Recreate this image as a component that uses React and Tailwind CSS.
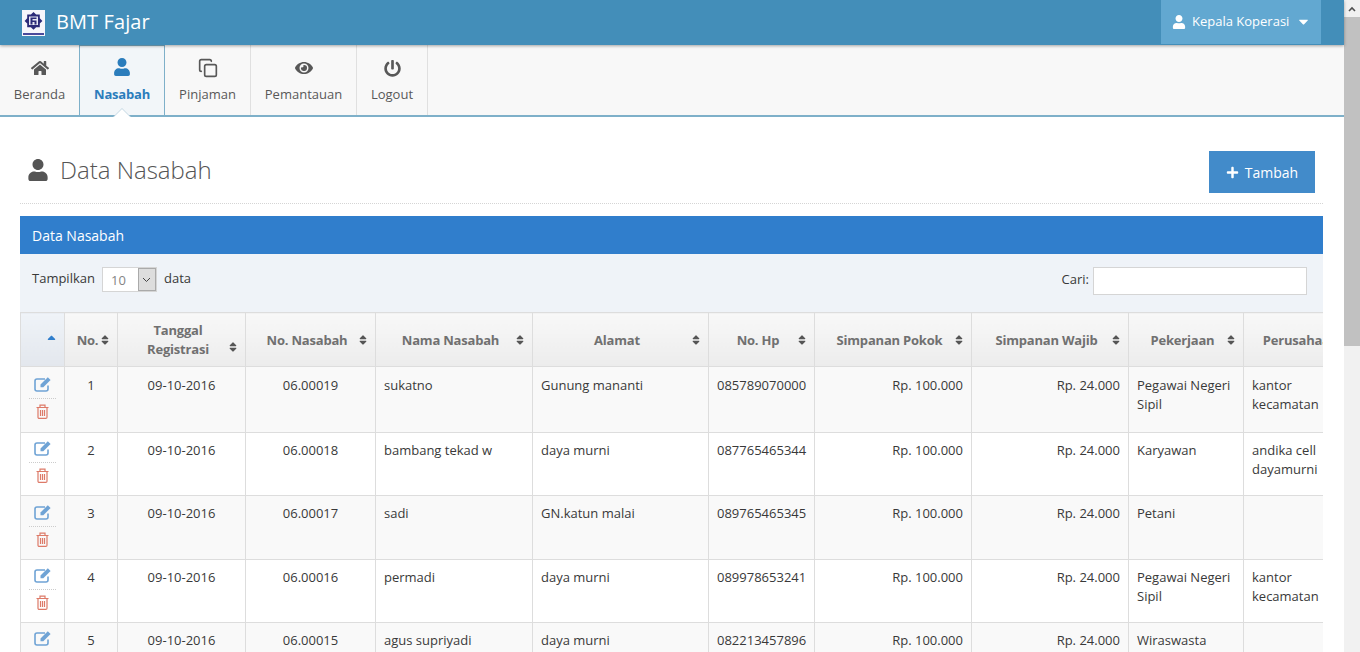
import { Copy } from "lucide-react";
import {
  FaCaretDown,
  FaCaretUp,
  FaEye,
  FaHome,
  FaPlus,
  FaPowerOff,
  FaSort,
  FaUser,
} from "react-icons/fa";

const menu = [
  { label: "Beranda", icon: <FaHome size={18} />, width: "w-[80px]" },
  { label: "Nasabah", icon: <FaUser size={18} />, width: "w-[86px]", active: true },
  { label: "Pinjaman", icon: <Copy size={20} strokeWidth={2} />, width: "w-[86px]" },
  { label: "Pemantauan", icon: <FaEye size={18} />, width: "w-[106px]" },
  { label: "Logout", icon: <FaPowerOff size={17} />, width: "w-[71px]" },
];

const columns = [
  { label: "", width: "w-[44px]" },
  { label: "No.", width: "w-[53px]" },
  { label: "Tanggal Registrasi", width: "w-[128px]" },
  { label: "No. Nasabah", width: "w-[130px]" },
  { label: "Nama Nasabah", width: "w-[157px]" },
  { label: "Alamat", width: "w-[176px]" },
  { label: "No. Hp", width: "w-[106px]" },
  { label: "Simpanan Pokok", width: "w-[157px]" },
  { label: "Simpanan Wajib", width: "w-[157px]" },
  { label: "Pekerjaan", width: "w-[115px]" },
  { label: "Perusahaan", width: "w-[115px]" },
];

const rows = [
  { no: 1, nasabah: "06.00019", nama: "sukatno", alamat: "Gunung mananti", hp: "085789070000", kerja: "Pegawai Negeri Sipil", usaha: "kantor kecamatan", height: "h-[66px]", pad: "pt-[9px]", iconPad: "pt-[8px]" },
  { no: 2, nasabah: "06.00018", nama: "bambang tekad w", alamat: "daya murni", hp: "087765465344", kerja: "Karyawan", usaha: "andika cell dayamurni", height: "h-[63px]", pad: "pt-[8px]", iconPad: "pt-[6px]" },
  { no: 3, nasabah: "06.00017", nama: "sadi", alamat: "GN.katun malai", hp: "089765465345", kerja: "Petani", usaha: "", height: "h-[64px]", pad: "pt-[8px]", iconPad: "pt-[7px]" },
  { no: 4, nasabah: "06.00016", nama: "permadi", alamat: "daya murni", hp: "089978653241", kerja: "Pegawai Negeri Sipil", usaha: "kantor kecamatan", height: "h-[63px]", pad: "pt-[8px]", iconPad: "pt-[6px]" },
  { no: 5, nasabah: "06.00015", nama: "agus supriyadi", alamat: "daya murni", hp: "082213457896", kerja: "Wiraswasta", usaha: "", height: "h-[63px]", pad: "pt-[8px]", iconPad: "pt-[6px]" },
];

const Logo = () => (
  <svg width="23" height="26" viewBox="0 0 23 26">
    <rect width="23" height="26" fill="#f6f6fb" />
    <path d="M11.5 2l2.6 2.6h3.7v3.7l2.6 2.6-2.6 2.6v3.7h-3.7l-2.6 2.6-2.6-2.6H5.2v-3.7l-2.6-2.6 2.6-2.6V4.6h3.7z" fill="#2b2a78" />
    <rect x="7" y="6.5" width="9" height="8.5" fill="#e8e8f4" />
    <path d="M8.5 7.5h2v7h-2zM10.5 7.5h4v1.5h-4zM10.5 10.5h4v1.5h-4zM12.5 12h2v2.5h-2z" fill="#2b2a78" />
    <rect x="1" y="23" width="21" height="2" fill="#4a4a9a" />
  </svg>
);

// pencil-square, thicker than the react-icons one
const EditIcon = () => (
  <svg width="18" height="18" viewBox="0 0 18 18" className="ml-[1px]">
    <path d="M14 10.5V14a2 2 0 0 1-2 2H3a2 2 0 0 1-2-2V6a2 2 0 0 1 2-2h8" fill="none" stroke="#6fa3d5" strokeWidth="1.6" />
    <path d="M6.5 9.5L13.8 2.2 16.6 5l-7.3 7.3H6.5z" fill="#6fa3d5" />
  </svg>
);

const TrashIcon = () => (
  <svg width="13" height="15" viewBox="0 0 13 15" className="mt-[5px]" fill="none" stroke="#dd7a68" strokeWidth="1.2">
    <path d="M0.5 3.5h12M4 3.5V1.2h5v2.3M2 3.5v9.7a1.2 1.2 0 0 0 1.2 1.2h6.6a1.2 1.2 0 0 0 1.2-1.2V3.5M4.5 6v6M6.5 6v6M8.5 6v6" />
  </svg>
);

const HeaderCell = ({ col, index }) => {
  const first = index === 0;
  return (
    <th
      className={`border border-[#ddd] pl-[11px] pr-[6px] h-[54px] font-bold text-[#707070] tracking-[-0.2px] ${col.width} ${
        first ? "bg-linear-to-b from-[#eff3f8] to-[#e3e7ed]" : "bg-linear-to-b from-[#f8f8f8] to-[#ececec]"
      }`}
    >
      {first ? (
        <FaCaretUp size={13} className="ml-auto mt-[-4px]  text-[#307ecc]" />
      ) : (
        <div className={`flex items-center justify-center ${index === 2 ? "" : "relative top-[1px]"}`}>
          <span className={`flex-1 text-center leading-[19px] whitespace-pre-line ${index === 10 ? "pr-[6px]" : ""}`}>
            {col.label === "Tanggal Registrasi" ? "Tanggal\nRegistrasi" : col.label}
          </span>
          {index < 10 && (
            <FaSort size={12} className={`shrink-0 text-[#555] ${index === 2 ? "mt-[15px]" : "-mt-[1px]"}`} />
          )}
        </div>
      )}
    </th>
  );
};

const App = () => {
  return (
    <div className="flex h-screen overflow-hidden bg-white text-[13px] text-[#393939] font-['Open_Sans',sans-serif]">
      <div className="flex-1 min-w-0">
        <div className="relative z-10 h-[45px] bg-[#438eb9] shadow-[0_1px_3px_rgba(0,0,0,0.35)] flex items-center justify-between pl-[22px] pr-[23px]">
          <div className="flex items-center gap-[11px]">
            <Logo />
            <span className="text-[20px] text-white tracking-[0.1px] -mt-[2px]">BMT Fajar</span>
          </div>
          <div className="h-[44px] w-[160px] bg-[#62a8d1] -mt-[1px] flex items-center pl-[11px] text-white">
            <FaUser size={14} />
            <span className="ml-[6px] -mt-[1px]">Kepala Koperasi</span>
            <FaCaretDown size={15} className="ml-[7px] -mt-[1px]" />
          </div>
        </div>

        <div className="h-[72px] bg-[#f8f8f8] border-b-2 border-[#7eb0c9] flex">
          {menu.map((item) => (
            <div
              key={item.label}
              className={`relative h-[70px] flex flex-col items-center border-r ${item.width} ${
                item.active
                  ? "bg-[#f2f6f9] border-l border-t border-[#7eb0c9] -ml-[1px] pt-[11px] text-[#2b7dbc] font-bold tracking-[-0.2px]"
                  : "pt-[13px] border-[#e0e0e0] text-[#585858]"
              }`}
            >
              <div className="h-[20px] flex items-center">{item.icon}</div>
              <span className={item.active ? "mt-[8px]" : "mt-[7px]"}>{item.label}</span>
              {item.active && (
                <>
                  <div className="absolute -bottom-[2px] left-1/2 -ml-[9px] w-0 h-0 border-x-[9px] border-x-transparent border-b-[9px] border-b-[#c3d7e3]" />
                  <div className="absolute -bottom-[2px] left-1/2 -ml-[8px] w-0 h-0 border-x-[8px] border-x-transparent border-b-[8px] border-b-white" />
                </>
              )}
            </div>
          ))}
        </div>

        <div className="pl-5 pr-[21px]">
          <div className="h-[87px] pt-[34px] border-b border-dotted border-[#d5d5d5] flex items-start justify-between">
            <div className="flex items-center h-[38px] pl-[7px] gap-[11px] text-[#555]">
              <FaUser size={22} />
              <h1 className="text-[24px] font-light text-[#555]">Data Nasabah</h1>
            </div>
            <button className="mr-2 w-[106px] h-[42px] bg-[#428bca] text-white text-[14px] flex items-center justify-center gap-[6px]">
              <FaPlus size={13} />
              Tambah
            </button>
          </div>

          <div className="mt-3 h-[38px] bg-[#307ecc] text-white flex items-center px-3 text-[14px]">Data Nasabah</div>

          <div className="h-[58px] bg-[#eff3f8] flex items-start justify-between pl-3 pr-4 pt-[13px]">
            <div className="flex items-center">
              <span className="mb-[2px]">Tampilkan</span>
              <div className="ml-[7px] w-[55px] h-[25px] border border-[#d5d5d5] bg-white flex">
                <span className="flex-1 pl-2 text-[#858585] leading-[25px]">10</span>
                <div className="w-[18px] bg-[#ddd] border border-[#aaa] flex items-center justify-center">
                  <svg width="9" height="6" viewBox="0 0 9 6">
                    <path d="M1 1l3.5 3.5L8 1" fill="none" stroke="#444" strokeWidth="1" />
                  </svg>
                </div>
              </div>
              <span className="ml-[7px] mb-[2px]">data</span>
            </div>
            <div className="flex items-center">
              <span className="mb-[2px]">Cari:</span>
              <div className="ml-1 w-[214px] h-[28px] bg-white border border-[#d5d5d5]" />
            </div>
          </div>

          <div className="overflow-hidden">
            <table className="table-fixed w-[1319px] border-collapse">
              <thead>
                <tr>
                  {columns.map((col, i) => (
                    <HeaderCell key={i} col={col} index={i} />
                  ))}
                </tr>
              </thead>
              <tbody>
                {rows.map((row) => (
                  <tr key={row.no} className={`${row.height} odd:bg-[#f9f9f9] even:bg-white`}>
                    <td className={`border border-[#ddd] px-2 align-top ${row.iconPad}`}>
                      <div className="flex flex-col items-center">
                        <EditIcon />
                        <div className="w-[27px] mt-[5px] border-b border-dotted border-[#ccc]" />
                        <TrashIcon />
                      </div>
                    </td>
                    <td className={`border border-[#ddd] px-2 align-top text-center leading-[18.5px] ${row.pad}`}>{row.no}</td>
                    <td className={`border border-[#ddd] px-2 align-top text-center leading-[18.5px] ${row.pad}`}>09-10-2016</td>
                    <td className={`border border-[#ddd] px-2 align-top text-center leading-[18.5px] ${row.pad}`}>{row.nasabah}</td>
                    <td className={`border border-[#ddd] px-2 align-top leading-[18.5px] ${row.pad}`}>{row.nama}</td>
                    <td className={`border border-[#ddd] px-2 align-top leading-[18.5px] ${row.pad}`}>{row.alamat}</td>
                    <td className={`border border-[#ddd] px-2 align-top leading-[18.5px] ${row.pad}`}>{row.hp}</td>
                    <td className={`border border-[#ddd] px-2 align-top text-right leading-[18.5px] ${row.pad}`}>Rp. 100.000</td>
                    <td className={`border border-[#ddd] px-2 align-top text-right leading-[18.5px] ${row.pad}`}>Rp. 24.000</td>
                    <td className={`border border-[#ddd] px-2 align-top leading-[18.5px] ${row.pad}`}>{row.kerja}</td>
                    <td className={`border border-[#ddd] px-2 align-top leading-[18.5px] ${row.pad}`}>{row.usaha}</td>
                  </tr>
                ))}
              </tbody>
            </table>
          </div>
        </div>
      </div>

      <div className="w-[16px] shrink-0 bg-[#f1f1f1] flex flex-col">
        <div className="h-[17px] flex items-center justify-center">
          <svg width="8" height="6" viewBox="0 0 8 6">
            <path d="M1 5l3-3 3 3" fill="none" stroke="#505050" strokeWidth="1.6" />
          </svg>
        </div>
        <div className="h-[329px] bg-[#c1c1c1]" />
      </div>
    </div>
  );
};

export default App;
